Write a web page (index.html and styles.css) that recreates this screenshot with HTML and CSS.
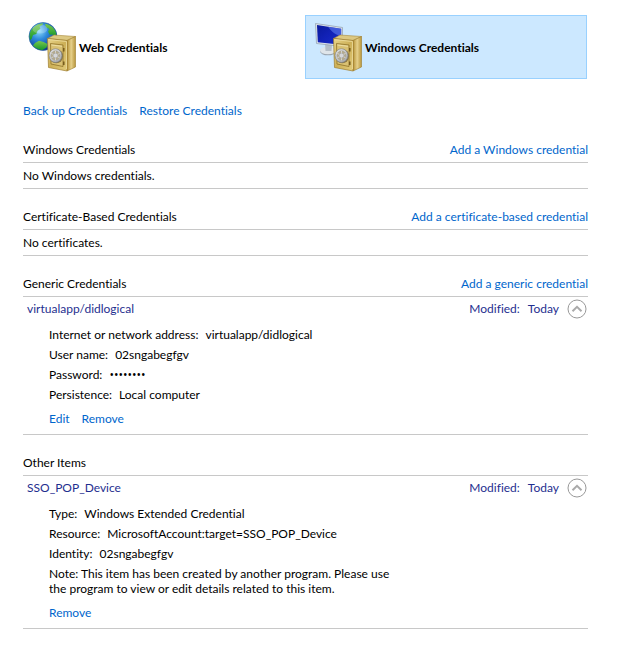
FILE: index.html
```html
<!DOCTYPE html>
<html lang="en">

    <head>
        <meta charset="UTF-8">
        <meta name="viewport" content="width=device-width, initial-scale=1.0">
        <title>Credential Manager</title>
        <link rel="stylesheet" href="styles.css">
    </head>

    <body>
        <!-- shared drawings -->
        <svg class="defs" width="0" height="0" aria-hidden="true">
            <defs>
                <linearGradient id="front" x1="0" y1="0" x2="1" y2="1">
                    <stop offset="0" stop-color="#e9d58a" />
                    <stop offset=".5" stop-color="#cdb057" />
                    <stop offset="1" stop-color="#e2cc7c" />
                </linearGradient>
                <linearGradient id="side" x1="0" y1="0" x2="1" y2="0">
                    <stop offset="0" stop-color="#b59236" />
                    <stop offset=".5" stop-color="#e6d08a" />
                    <stop offset="1" stop-color="#b8963c" />
                </linearGradient>
                <radialGradient id="dial" cx=".4" cy=".35" r=".7">
                    <stop offset="0" stop-color="#f2f2f0" />
                    <stop offset=".7" stop-color="#c4c6c8" />
                    <stop offset="1" stop-color="#97999c" />
                </radialGradient>
                <radialGradient id="ocean" cx=".36" cy=".3" r=".75">
                    <stop offset="0" stop-color="#8fdcfa" />
                    <stop offset=".4" stop-color="#2f8bdc" />
                    <stop offset="1" stop-color="#0a2c86" />
                </radialGradient>
                <linearGradient id="land" x1="0" y1="0" x2="0" y2="1">
                    <stop offset="0" stop-color="#7ac850" />
                    <stop offset="1" stop-color="#17982c" />
                </linearGradient>
                <linearGradient id="screen" x1="0" y1="0" x2="1" y2="1">
                    <stop offset="0" stop-color="#0a1a9c" />
                    <stop offset=".5" stop-color="#1222b8" />
                    <stop offset="1" stop-color="#1a2ec4" />
                </linearGradient>
                <g id="safe">
                    <path d="M19.5 15.5 26 12l21.5 1.5L39 17.5z" fill="#dcc882" stroke="#a98a3c" stroke-width=".6" />
                    <path d="M39 17.5l8.500-4V44L39 48z" fill="url(#side)" stroke="#9d7d2e" stroke-width=".6" />
                    <path d="M19.500 15.500 39 17.500V48l-18.500-3.500z" fill="url(#front)" stroke="#9d7d2e" stroke-width=".7" />
                    <path d="M20.500 16.600 38.500 18.500V46" fill="none" stroke="#efe0a2" stroke-width=".8" />
                    <path d="M22.500 20.500 35 22v21.500l-12-2.500z" fill="#d9c173" stroke="#8f7228" stroke-width=".8" />
                    <path d="M23.500 22 34 23.300" fill="none" stroke="#f3e6b0" stroke-width=".8" />
                    <path d="M35.800 25v3.500M35.800 38.500v3.500" fill="none" stroke="#6f5518" stroke-width="1.400" />
                    <ellipse cx="28.300" cy="33.200" rx="6.800" ry="7" fill="#8c7843" />
                    <ellipse cx="27.500" cy="32.600" rx="6.500" ry="6.900" fill="url(#dial)" stroke="#7d7f82" stroke-width=".6" />
                    <ellipse cx="27.500" cy="32.600" rx="4.600" ry="4.900" fill="#b5ab8c" stroke="#9a9c9e" stroke-width=".5" />
                    <path d="M27.500 27.800v9.600M23.400 30.400l8.200 4.400M31.600 30.400l-8.200 4.400" stroke="#d4d4d0" stroke-width="1" />
                    <circle cx="27.500" cy="32.600" r="2.400" fill="#d6d7d9" stroke="#9a9c9e" stroke-width=".5" />
                </g>
            </defs>
        </svg>

        <main class="manager">
            <div class="tabs">
                <button type="button" class="tab">
                    <svg class="tab-icon" viewBox="0 0 48 48" aria-hidden="true">
                        <circle cx="15" cy="13.500" r="14" fill="url(#ocean)" stroke="#27619f" stroke-width=".6" />
                        <path d="M4 6C7 2 11 .300 15 .200l-.500 1.800-3 1.500 1 2.200-3 2-1.200 3.300-3.300 1-1.300 3.800-1.700 1.400C1 13 1.500 9 4 6z" fill="url(#land)" />
                        <path d="M17 .700c6 .800 10 4.800 11.400 9.800l-1.400 3-2.500-2-2.800.200-1.700-3.200 1.500-2.500-3.500-1.800z" fill="url(#land)" />
                        <path d="M7 20l4-2.200 4.500 1.200 4 2-1 3.500-4 2.500C11 27 7 24.800 5 22.500z" fill="url(#land)" />
                        <ellipse cx="12" cy="6" rx="7.500" ry="4.500" fill="#ffffff" opacity=".22" />
                        <use href="#safe" />
                    </svg>
                    <span>Web Credentials</span>
                </button>
                <button type="button" class="tab active">
                    <svg class="tab-icon" viewBox="0 0 48 48" aria-hidden="true">
                        <ellipse cx="14" cy="28.300" rx="8" ry="4" fill="#9aa5b0" />
                        <ellipse cx="14" cy="27.500" rx="8" ry="3.800" fill="#dfe5ea" />
                        <path d="M11 20l7 1.500-.500 6.500h-6z" fill="#b4bec7" />
                        <path d="M1.500.500 28.500 4.500V23.500L2.500 20.500z" fill="#dde4ec" stroke="#8f9cab" stroke-width=".7" />
                        <path d="M3 2 27.200 5.700V21.800L3.800 19.200z" fill="url(#screen)" />
                        <path d="M14 3.700 27.200 5.700v7.500c-5-1-9-4-13.200-9.500z" fill="#5f7df0" opacity=".6" />
                        <use href="#safe" />
                    </svg>
                    <span>Windows Credentials</span>
                </button>
            </div>

            <div class="links backup">
                <a href="#">Back up Credentials</a>
                <a href="#">Restore Credentials</a>
            </div>

            <section class="group">
                <div class="group-head">
                    <h2>Windows Credentials</h2>
                    <a href="#">Add a Windows credential</a>
                </div>
                <p class="empty">No Windows credentials.</p>
            </section>

            <section class="group">
                <div class="group-head">
                    <h2>Certificate-Based Credentials</h2>
                    <a href="#">Add a certificate-based credential</a>
                </div>
                <p class="empty">No certificates.</p>
            </section>

            <section class="group">
                <div class="group-head">
                    <h2>Generic Credentials</h2>
                    <a href="#">Add a generic credential</a>
                </div>
                <div class="item-head">
                    <h3>virtualapp/didlogical</h3>
                    <span class="modified"><span>Modified:</span><span>Today</span></span>
                    <button type="button" class="toggle" aria-label="Collapse virtualapp/didlogical">
                        <svg viewBox="0 0 20 20"><circle cx="10" cy="10" r="9" /><path d="M5.500 12.200 10 7.800l4.500 4.400" /></svg>
                    </button>
                </div>
                <div class="item-body">
                    <dl>
                        <div><dt>Internet or network address:</dt><dd>virtualapp/didlogical</dd></div>
                        <div><dt>User name:</dt><dd>02sngabegfgv</dd></div>
                        <div><dt>Password:</dt><dd class="password">••••••••</dd></div>
                        <div><dt>Persistence:</dt><dd>Local computer</dd></div>
                    </dl>
                    <div class="links">
                        <a href="#">Edit</a>
                        <a href="#">Remove</a>
                    </div>
                </div>
            </section>

            <section class="group">
                <div class="group-head">
                    <h2>Other Items</h2>
                </div>
                <div class="item-head">
                    <h3>SSO_POP_Device</h3>
                    <span class="modified"><span>Modified:</span><span>Today</span></span>
                    <button type="button" class="toggle" aria-label="Collapse SSO_POP_Device">
                        <svg viewBox="0 0 20 20"><circle cx="10" cy="10" r="9" /><path d="M5.500 12.200 10 7.800l4.500 4.400" /></svg>
                    </button>
                </div>
                <div class="item-body">
                    <dl>
                        <div><dt>Type:</dt><dd>Windows Extended Credential</dd></div>
                        <div><dt>Resource:</dt><dd>MicrosoftAccount:target=SSO_POP_Device</dd></div>
                        <div><dt>Identity:</dt><dd>02sngabegfgv</dd></div>
                    </dl>
                    <p class="note">Note: This item has been created by another program. Please use the program to view or edit details related to this item.</p>
                    <div class="links">
                        <a href="#">Remove</a>
                    </div>
                </div>
            </section>
        </main>
    </body>

</html>
```
FILE: styles.css
```css
* {
    box-sizing: border-box;
    padding: 0;
    margin: 0;
}

body {
    background: #fff;
    color: #000;
    font-family: Lato, "Open Sans", sans-serif;
    font-size: 12px;
    line-height: 20px;
    font-variant-ligatures: none;
}

.defs {
    position: absolute;
}

a {
    color: #0066cc;
    text-decoration: none;
}

a:hover {
    text-decoration: underline;
}

h2,
h3 {
    font-size: 12px;
    font-weight: normal;
}

.manager {
    padding: 15px 34px 20px 23px;
}

.tabs {
    display: grid;
    grid-template-columns: 1fr 1fr;
    gap: 4px;
    margin: 0 1px 0 -4px;
}

.tab {
    display: flex;
    align-items: center;
    gap: 3px;
    height: 64px;
    padding: 0 8px;
    border: 1px solid transparent;
    background: none;
    color: #000;
    font-family: inherit;
    font-size: 12px;
    font-weight: bold;
    font-variant-ligatures: none;
}

.tab.active {
    border-color: #99d1ff;
    background: #cce8ff;
}

.tab-icon {
    flex: none;
    width: 48px;
    height: 48px;
    overflow: visible;
}

.links {
    display: flex;
    gap: 12px;
}

.backup {
    padding: 22px 0 1px;
}

.group {
    padding-top: 16px;
    border-bottom: 1px solid #c8c8c8;
}

.group-head {
    display: flex;
    justify-content: space-between;
    align-items: center;
    height: 25px;
    border-bottom: 1px solid #c8c8c8;
}

.empty {
    padding: 3px 0 2px;
}

.item-head {
    display: flex;
    align-items: center;
    height: 24px;
    padding: 0 1px 0 4px;
    color: #1f2f8f;
}

.modified {
    display: flex;
    gap: 8px;
    margin-left: auto;
}

.toggle {
    width: 20px;
    height: 20px;
    margin-left: 8px;
    border: none;
    background: none;
}

.toggle svg {
    display: block;
    fill: none;
    stroke: #999;
}

.toggle path {
    stroke: #aaa;
    stroke-width: 2;
}

.item-body {
    padding: 4px 0 5px 26px;
}

.item-body dl div {
    display: flex;
    gap: 7px;
}

.item-body .links {
    margin-top: 4px;
}

.password {
    font-family: "Open Sans", sans-serif;
}

.note {
    max-width: 360px;
    padding: 2px 0 3px;
    line-height: 15px;
}
```
